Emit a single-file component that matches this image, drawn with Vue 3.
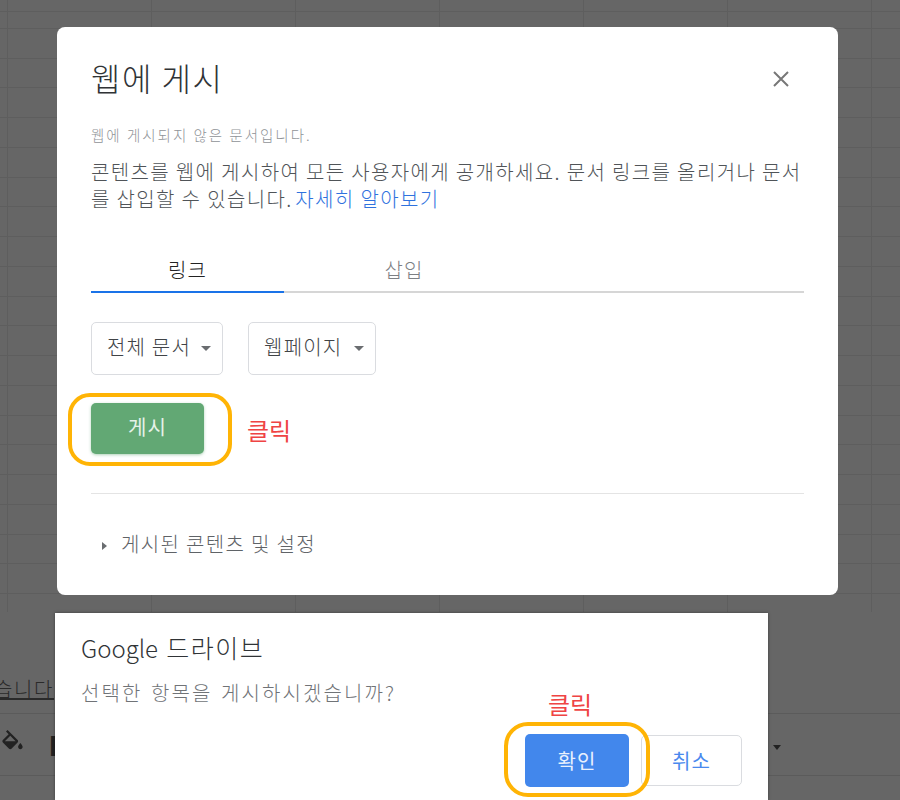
<template>
  <div class="page">
    <div class="sheet"></div>
    <div class="under">
      <span class="under-text">습니다</span>
      <svg class="bucket" width="27" height="27" viewBox="0 0 24 24"><path d="M16.560 8.940L7.620 0 6.210 1.410l2.380 2.380-5.150 5.150c-.59.59-.59 1.540 0 2.120l5.500 5.500c.29.29.68.44 1.060.44s.77-.15 1.060-.44l5.500-5.500c.59-.58.59-1.530 0-2.120zM5.210 10L10 5.210 14.790 10H5.210zM19 11.500s-2 2.170-2 3.500c0 1.100.9 2 2 2s2-.9 2-2c0-1.330-2-3.500-2-3.500z" fill="#222"/></svg>
      <span class="under-b">B</span>
      <span class="under-caret"></span>
    </div>

    <section class="dialog">
      <header class="head">
        <h1>웹에 게시</h1>
        <svg class="close" width="18" height="18" viewBox="0 0 18 18"><path d="M2 2l14 14M16 2 2 16" stroke="#777" stroke-width="2" fill="none"/></svg>
      </header>
      <p class="state">웹에 게시되지 않은 문서입니다.</p>
      <p class="desc">콘텐츠를 웹에 게시하여 모든 사용자에게 공개하세요. 문서 링크를 올리거나 문서를 삽입할 수 있습니다. <a>자세히 알아보기</a></p>
      <nav class="tabs">
        <span class="tab active">링크</span>
        <span class="tab">삽입</span>
      </nav>
      <div class="selects">
        <div class="select s1">전체 문서<i class="caret"></i></div>
        <div class="select s2">웹페이지<i class="caret"></i></div>
      </div>
      <div class="publish-row">
        <button class="publish">게시</button>
        <span class="ring ring-a"></span>
        <span class="click click-a">클릭</span>
      </div>
      <hr />
      <div class="more"><i class="tri"></i>게시된 콘텐츠 및 설정</div>
    </section>

    <section class="confirm">
      <h2>Google <span>드라이브</span></h2>
      <p>선택한 항목을 게시하시겠습니까?</p>
      <div class="actions">
        <span class="click click-b">클릭</span>
        <button class="ok">확인</button>
        <span class="ring ring-b"></span>
        <button class="cancel">취소</button>
      </div>
    </section>
  </div>
</template>

<script setup>
</script>

<style scoped>
.page {
  position: relative;
  width: 900px;
  height: 800px;
  overflow: hidden;
  background: #666;
  font-family: "Noto Sans CJK KR", "Noto Sans", sans-serif;
  font-weight: 300;
}
.sheet {
  height: 612px;
  background-color: #666;
  background-image:
    repeating-linear-gradient(to right, #5e5e5e 0 1px, transparent 1px 144px),
    repeating-linear-gradient(to bottom, #5e5e5e 0 1px, transparent 1px 29.75px);
  background-position: 7px 0, 0 28px;
}
.under {
  position: relative;
  height: 188px;
}
.under::before,
.under::after {
  content: "";
  position: absolute;
  left: 0;
  right: 0;
  height: 1px;
  background: #5b5b5b;
}
.under::before { top: 101px; }
.under::after { top: 163px; }
.under-text {
  position: absolute;
  left: -6px;
  top: 62px;
  font-size: 20px;
  letter-spacing: 1.600px;
  line-height: 30px;
  color: #2a2a2a;
  text-decoration: underline;
}
.bucket { position: absolute; left: -1px; top: 118px; }
.under-b {
  position: absolute;
  left: 49px;
  top: 117px;
  font: 700 30px/34px "Liberation Sans", sans-serif;
  color: #222;
}
.under-caret {
  position: absolute;
  left: 773px;
  top: 133px;
  border: 4px solid transparent;
  border-top: 5px solid #222;
  border-bottom: 0;
}
.dialog {
  position: absolute;
  left: 57px;
  top: 27px;
  width: 781px;
  height: 568px;
  box-sizing: border-box;
  padding: 0 34px;
  background: #fff;
  border-radius: 8px;
}
.head {
  display: flex;
  align-items: center;
  justify-content: space-between;
  height: 100px;
}
h1 {
  margin: 0;
  font-size: 32px;
  font-weight: 300;
  letter-spacing: 1.500px;
  color: #303336;
  line-height: 46px;
}
.close { margin-right: 14px; margin-top: 3px; }
.state {
  margin: 0;
  font-size: 14.500px;
  letter-spacing: 2px;
  line-height: 16px;
  color: #8f9397;
}
.desc {
  margin: 16px 0 0;
  font-size: 20px;
  letter-spacing: 1.360px;
  line-height: 26.500px;
  color: #505458;
}
.desc a {
  margin-left: -3px;
  color: #2f72de;
}
.tabs {
  display: flex;
  margin-top: 31px;
  height: 48px;
  border-bottom: 2px solid #d6d6d6;
}
.tab {
  box-sizing: border-box;
  width: 193px;
  height: 50px;
  text-align: center;
  font-size: 20px;
  letter-spacing: 1px;
  line-height: 54px;
  color: #7d8084;
  border-bottom: 2px solid transparent;
}
.tab + .tab { width: 240px; }
.active {
  color: #222;
  border-bottom-color: #1a73e8;
}
.selects {
  display: flex;
  gap: 25px;
  margin-top: 29px;
}
.select {
  display: flex;
  align-items: center;
  gap: 10px;
  box-sizing: border-box;
  height: 53px;
  padding: 0 11px 4px 15px;
  border: 1px solid #dadce0;
  border-radius: 5px;
  font-size: 20px;
  letter-spacing: 1.200px;
  color: #404346;
}
.s2 { gap: 12px; }
.caret {
  margin-top: 4px;
  border: 5px solid transparent;
  border-top: 5px solid #6a6d70;
  border-bottom: 0;
}
.publish-row {
  position: relative;
  margin-top: 28px;
  height: 51px;
}
button {
  font-family: inherit;
  box-sizing: border-box;
  cursor: pointer;
}
.publish {
  width: 113px;
  height: 51px;
  padding-bottom: 5px;
  border: 0;
  border-radius: 5px;
  background: #62a874;
  color: #e6f2e9;
  font-size: 20px;
  font-weight: 400;
  letter-spacing: 1px;
  box-shadow: 0 1px 3px rgba(98, 168, 116, .5);
}
.ring {
  position: absolute;
  box-sizing: border-box;
  border: 4px solid #ffb405;
}
.ring-a {
  left: -23px;
  top: -10px;
  width: 164px;
  height: 73px;
  border-radius: 22px;
}
.click {
  color: #ef4444;
  font-size: 24px;
  line-height: 34px;
  font-weight: 400;
}
.click-a {
  position: absolute;
  left: 156px;
  top: 10px;
}
hr {
  margin: 39px 0 0;
  border: 0;
  height: 1px;
  background: #e4e4e4;
}
.more {
  display: flex;
  align-items: center;
  margin-top: 36px;
  font-size: 20px;
  letter-spacing: 1.350px;
  line-height: 28px;
  color: #5f6367;
}
.tri {
  width: 0;
  margin: 4px 14px 0 11px;
  border: 4px solid transparent;
  border-left: 5px solid #6a6d70;
  border-right: 0;
}
.confirm {
  position: absolute;
  left: 55px;
  top: 613px;
  width: 713px;
  height: 187px;
  box-sizing: border-box;
  padding: 17px 26px 0;
  background: #fff;
  box-shadow: 0 0 3px rgba(0, 0, 0, .4);
}
h2 {
  margin: 0;
  font-size: 24px;
  line-height: 34px;
  font-weight: 300;
  word-spacing: 3px;
  color: #303336;
}
h2 span {
  font-size: 25px;
  letter-spacing: 1.500px;
}
.confirm p {
  margin: 15px 0 0;
  font-size: 20px;
  letter-spacing: 2.100px;
  word-spacing: 2px;
  line-height: 26px;
  color: #707377;
}
.actions {
  position: absolute;
  right: 26px;
  top: 121px;
  display: flex;
  gap: 12px;
}
.ok, .cancel {
  width: 104px;
  height: 53px;
  padding-bottom: 2px;
  border-radius: 5px;
  font-size: 20px;
  font-weight: 400;
  letter-spacing: 1px;
}
.ok {
  border: 0;
  background: #4287ec;
  color: #e8f0fd;
}
.cancel {
  width: 101px;
  height: 51px;
  margin-top: 1px;
  border: 1px solid #dadce0;
  background: #fff;
  color: #4a89ee;
}
.ring-b {
  left: -21px;
  top: -12px;
  width: 146px;
  height: 75px;
  border-radius: 24px;
}
.click-b {
  position: absolute;
  left: 23px;
  top: -47px;
}
</style>
